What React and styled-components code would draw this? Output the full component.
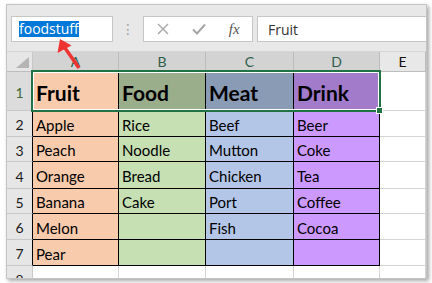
import React from "react";
import styled, { createGlobalStyle } from "styled-components";

const GlobalStyle = createGlobalStyle`
  html, body {
    margin: 0;
    padding: 0;
    background: #ffffff;
  }
`;

const Page = styled.div`
  position: relative;
  width: 432px;
  height: 283px;
  overflow: hidden;
`;

const Frame = styled.div`
  margin: 4px 0 0 6px;
  width: 421px;
  height: 275px;
  box-sizing: border-box;
  border: 1px solid #c4c4c4;
  background: #ffffff;
  box-shadow: 2px 2px 4px rgba(0, 0, 0, 0.35);
  display: flex;
  flex-direction: column;
  overflow: hidden;
`;

const Toolbar = styled.div`
  height: 47px;
  flex: none;
  box-sizing: border-box;
  padding: 11px 0 0 4px;
  background: #e8e8e8;
  border-bottom: 1px solid #d6d6d6;
  display: flex;
  align-items: flex-start;
`;

const NameBox = styled.div`
  width: 102px;
  height: 26px;
  box-sizing: border-box;
  border: 1px solid #c6c6c6;
  background: #ffffff;
  display: flex;
  align-items: center;
  padding-left: 7px;
  font-family: "Open Sans", sans-serif;
  font-size: 14px;
`;

const Highlight = styled.span`
  background: #0078d7;
  color: #ffffff;
  line-height: 16px;
`;

const Dots = styled.div`
  width: 30px;
  height: 26px;
  display: flex;
  align-items: center;
  justify-content: center;
  color: #a0a0a0;
  font-family: "DejaVu Sans", sans-serif;
  font-size: 14px;
`;

const ButtonBox = styled.div`
  width: 110px;
  height: 26px;
  box-sizing: border-box;
  border: 1px solid #c6c6c6;
  background: #ffffff;
  display: flex;
  align-items: center;
  padding-left: 1px;
`;

const IconSlot = styled.div`
  width: 36px;
  height: 24px;
  display: flex;
  align-items: center;
  justify-content: center;
  color: #a6a6a6;
`;

const Fx = styled.span`
  font-family: "Liberation Serif", serif;
  font-style: italic;
  font-size: 15px;
  color: #555555;
`;

const FormulaInput = styled.div`
  flex: 1;
  margin-left: 4px;
  height: 26px;
  box-sizing: border-box;
  border: 1px solid #c6c6c6;
  border-right: none;
  background: #ffffff;
  display: flex;
  align-items: center;
  padding-left: 10px;
  font-family: "Open Sans", sans-serif;
  font-size: 14px;
  color: #333333;
`;

const Sheet = styled.div`
  display: grid;
  grid-template-columns: 26px 86px 87px 88px 86px 1fr;
  grid-template-rows: 20px 39px 26px 25px 27px 25px 26px 26px 26px;
`;

const Corner = styled.div`
  background: #e6e6e6;
  border-right: 1px solid #c8c8c8;
  border-bottom: 1px solid #bdbdbd;
  box-sizing: border-box;
  display: flex;
  align-items: flex-end;
  justify-content: flex-end;
  padding: 0 3px 3px 0;
`;

const ColHead = styled.div`
  box-sizing: border-box;
  background: ${(p) => (p.$selected ? "#d3d3d3" : "#e8e8e8")};
  border-right: 1px solid #bcbcbc;
  border-bottom: 1px solid #bdbdbd;
  display: flex;
  align-items: center;
  justify-content: center;
  font-family: Lato, sans-serif;
  font-size: 14px;
  color: ${(p) => (p.$selected ? "#2f5d49" : "#111111")};
`;

const RowHead = styled.div`
  grid-column: ${(p) => (p.$row ? 1 : "auto")};
  grid-row: ${(p) => p.$row || "auto"};
  box-sizing: border-box;
  background: ${(p) => (p.$selected ? "#dcdcdc" : "#e6e6e6")};
  border-right: 1px solid ${(p) => (p.$dark ? "#000000" : "#c8c8c8")};
  border-bottom: 1px solid #c8c8c8;
  display: flex;
  align-items: center;
  justify-content: center;
  padding-top: 2px;
  font-family: Lato, sans-serif;
  font-size: 14px;
  color: ${(p) => (p.$selected ? "#3a6b3a" : "#1a1a1a")};
`;

const Cell = styled.div`
  grid-column: ${(p) => p.$col || "auto"};
  grid-row: ${(p) => p.$row || "auto"};
  box-sizing: border-box;
  background: ${(p) => p.$bg || "#ffffff"};
  border-right: 1px solid ${(p) => p.$line || "#000000"};
  border-bottom: 1px solid ${(p) => p.$line || "#000000"};
  display: flex;
  align-items: center;
  padding: 2px 0 0 3px;
  font-family: Lato, sans-serif;
  font-size: 15px;
  color: #000000;
  white-space: nowrap;
  overflow: hidden;
`;

const HeadCell = styled(Cell)`
  font-size: 21px;
  font-weight: 700;
  padding-top: 3px;
`;

const Selection = styled.div`
  grid-column: 2 / 6;
  grid-row: 2;
  margin: -2px -1px -1px -2px;
  border: 2px solid #217346;
  box-shadow: inset 0 0 0 1px #ffffff;
  position: relative;
  pointer-events: none;
`;

const FillHandle = styled.div`
  position: absolute;
  right: -4px;
  bottom: -4px;
  width: 5px;
  height: 5px;
  background: #217346;
  border: 1px solid #ffffff;
`;

const Arrow = styled.svg`
  position: absolute;
  left: 0;
  top: 0;
  pointer-events: none;
`;

const columns = [
  { letter: "A", head: "Fruit", headBg: "#f8cbad", bg: "#f8cbad" },
  { letter: "B", head: "Food", headBg: "#9bae8c", bg: "#c6e0b4" },
  { letter: "C", head: "Meat", headBg: "#8a9bb5", bg: "#b4c6e7" },
  { letter: "D", head: "Drink", headBg: "#a27bcb", bg: "#cc99ff" },
];

const rows = [
  ["Apple", "Rice", "Beef", "Beer"],
  ["Peach", "Noodle", "Mutton", "Coke"],
  ["Orange", "Bread", "Chicken", "Tea"],
  ["Banana", "Cake", "Port", "Coffee"],
  ["Melon", "", "Fish", "Cocoa"],
  ["Pear", "", "", ""],
];

const grey = "#d4d4d4";

export default function App() {
  return (
    <Page>
      <GlobalStyle />
      <Frame>
        <Toolbar>
          <NameBox>
            <Highlight>foodstuff</Highlight>
          </NameBox>
          <Dots>⋮</Dots>
          <ButtonBox>
            <IconSlot>
              <svg width="12" height="12" viewBox="0 0 12 12">
                <path d="M1 1L11 11M11 1L1 11" stroke="currentColor" strokeWidth="1.4" fill="none" />
              </svg>
            </IconSlot>
            <IconSlot>
              <svg width="14" height="12" viewBox="0 0 14 12">
                <path d="M1 6.5L5 10.5L13 1.5" stroke="currentColor" strokeWidth="2" fill="none" />
              </svg>
            </IconSlot>
            <IconSlot>
              <Fx>fx</Fx>
            </IconSlot>
          </ButtonBox>
          <FormulaInput>Fruit</FormulaInput>
        </Toolbar>
        <Sheet>
          <Corner>
            <svg width="13" height="11" viewBox="0 0 13 11">
              <polygon points="13,0 13,11 0,11" fill="#b4b4b4" />
            </svg>
          </Corner>
          {columns.map((c) => (
            <ColHead key={c.letter} $selected>
              {c.letter}
            </ColHead>
          ))}
          <ColHead>E</ColHead>

          <RowHead $row={2} $selected $dark>
            1
          </RowHead>
          {columns.map((c, j) => (
            <HeadCell key={c.head} $row={2} $col={j + 2} $bg={c.headBg}>
              {c.head}
            </HeadCell>
          ))}
          <Cell $row={2} $col={6} $line={grey} />
          <Selection>
            <FillHandle />
          </Selection>

          {rows.map((r, i) => (
            <React.Fragment key={i}>
              <RowHead $dark>{i + 2}</RowHead>
              {r.map((v, j) => (
                <Cell key={j} $bg={columns[j].bg}>
                  {v}
                </Cell>
              ))}
              <Cell $line={grey} />
            </React.Fragment>
          ))}

          <RowHead>8</RowHead>
          {columns.map((c) => (
            <Cell key={c.letter} $line={grey} />
          ))}
          <Cell $line={grey} />
        </Sheet>
      </Frame>
      <Arrow width="432" height="283" viewBox="0 0 432 283">
        <line x1="65" y1="48" x2="79" y2="68" stroke="#ee3333" strokeWidth="3.5" />
        <polygon points="60,39 57.5,53 71.5,45.5" fill="#ee3333" />
      </Arrow>
    </Page>
  );
}
